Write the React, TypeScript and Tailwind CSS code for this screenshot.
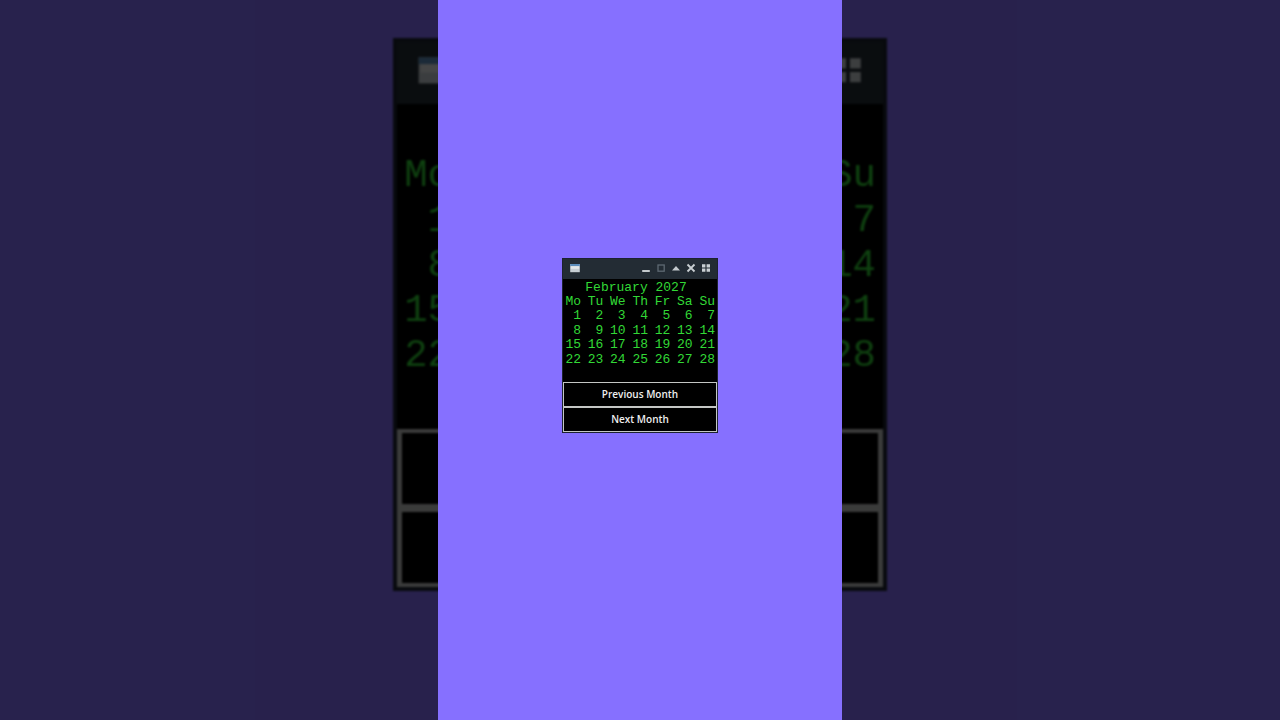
import React from 'react';

const DAYS = ['Mo', 'Tu', 'We', 'Th', 'Fr', 'Sa', 'Su'];

const WEEKS = [
  [1, 2, 3, 4, 5, 6, 7],
  [8, 9, 10, 11, 12, 13, 14],
  [15, 16, 17, 18, 19, 20, 21],
  [22, 23, 24, 25, 26, 27, 28],
];

const SIZES = {
  normal: {
    frame: 'w-[156px] border',
    bar: 'h-5 pl-[7px] pr-1.5 pb-0.5',
    icon: 'size-[10px]',
    controls: 'gap-[5px]',
    body: 'h-[103px] pt-[2px] px-[2px]',
    table: 'h-[86px] text-[13px] leading-[14px]',
    firstColumn: 'w-[16px]',
    title: 'pr-[8px]',
    button: 'h-[25px] border text-[10px]',
  },
  large: {
    frame: 'w-[494px] border-[4px]',
    bar: 'h-[62px] pl-[21px] pr-[19px] pb-[5px]',
    icon: 'size-[32px]',
    controls: 'gap-[15px]',
    body: 'h-[325px] pt-[5px] px-[7px]',
    table: 'h-[270px] text-[39px] leading-[45px]',
    firstColumn: 'w-[47px]',
    title: 'pr-[25px]',
    button: 'h-[79px] border-x-[5px] border-y-[4px] text-[35px]',
  },
};

interface CalendarWindowProps {
  size: 'normal' | 'large';
  // only the outer columns get text, the rest is covered by the main column
  edgesOnly?: boolean;
}

const WindowIcon: React.FC<{ className: string }> = ({ className }) => (
  <svg className={className} viewBox="0 0 10 10" aria-hidden="true">
    <rect x="0.2" y="1" width="9.6" height="8.2" fill="#c6ced3" />
    <rect x="0.2" y="1" width="9.6" height="2.2" fill="#5c8dbb" />
    <rect x="0.8" y="3.2" width="8.4" height="2.6" fill="#e4e8e9" />
  </svg>
);

const CONTROLS = [
  { label: 'Minimize', icon: <rect x="1.2" y="7" width="7.6" height="2" fill="#c3c9cd" /> },
  {
    label: 'Maximize',
    icon: <rect x="2" y="2" width="6.2" height="6.2" fill="none" stroke="#5d6972" strokeWidth="1.3" />,
  },
  { label: 'Shade', icon: <path d="M1 7.5 5 3l4 4.5z" fill="#c3c9cd" /> },
  {
    label: 'Close',
    icon: <path d="m1.5 1.5 7 7M8.5 1.5l-7 7" stroke="#c9cfd3" strokeWidth="1.8" />,
  },
  {
    label: 'Window menu',
    icon: <path d="M1 1.3h3.4v3.2H1zM5.6 1.3H9v3.2H5.6zM1 5.6h3.4v3.2H1zM5.6 5.6H9v3.2H5.6z" fill="#c9cfd3" />,
  },
];

const CalendarWindow: React.FC<CalendarWindowProps> = ({ size, edgesOnly = false }) => {
  const s = SIZES[size];
  const isShown = (column: number) => !edgesOnly || column === 0 || column === DAYS.length - 1;

  return (
    <section className={`shrink-0 bg-black border-[#1c2230] ${s.frame}`}>
      <header className={`flex items-center justify-between bg-[#232c34] ${s.bar}`}>
        <WindowIcon className={s.icon} />
        <div className={`flex items-center ${s.controls}`}>
          {CONTROLS.map((control) => (
            <button key={control.label} type="button" aria-label={control.label}>
              <svg className={s.icon} viewBox="0 0 10 10" aria-hidden="true">
                {control.icon}
              </svg>
            </button>
          ))}
        </div>
      </header>

      <div className={s.body}>
        <table
          className={`w-full table-fixed border-collapse whitespace-nowrap font-['Liberation_Mono',monospace] text-[#32d836] ${s.table}`}
        >
          <colgroup>
            <col className={s.firstColumn} />
            <col span={6} />
          </colgroup>
          <thead>
            <tr>
              <th colSpan={7} className={`p-0 text-center font-normal ${s.title}`}>
                {edgesOnly ? '\u00a0' : 'February 2027'}
              </th>
            </tr>
            <tr>
              {DAYS.map((day, i) => (
                <th key={day} scope="col" className="p-0 text-right font-normal">
                  {isShown(i) && day}
                </th>
              ))}
            </tr>
          </thead>
          <tbody>
            {WEEKS.map((week) => (
              <tr key={week[0]}>
                {week.map((day, i) => (
                  <td key={day} className="p-0 text-right">{isShown(i) && day}</td>
                ))}
              </tr>
            ))}
          </tbody>
        </table>
      </div>

      <div className="flex flex-col font-['Open_Sans',sans-serif] font-semibold text-[#eeeeee]">
        <button type="button" className={`border-[#c4c6c4] bg-black ${s.button}`}>
          {!edgesOnly && 'Previous Month'}
        </button>
        <button type="button" className={`border-[#c4c6c4] bg-black ${s.button}`}>
          {!edgesOnly && 'Next Month'}
        </button>
      </div>
    </section>
  );
};

const App: React.FC = () => {
  return (
    <div className="relative min-h-screen overflow-hidden bg-[#8670ff]">
      {/* enlarged, dimmed copy behind the main column */}
      <div
        className="absolute inset-0 flex items-center justify-center pb-[92px] blur-[1px]"
        aria-hidden="true"
        inert
      >
        <CalendarWindow size="large" edgesOnly />
      </div>
      <div className="absolute inset-0 bg-black/70" />

      <main className="relative mx-auto flex min-h-screen w-full max-w-[404px] items-center justify-center bg-[#8670ff] pb-[29px]">
        <CalendarWindow size="normal" />
      </main>
    </div>
  );
};

export default App;
